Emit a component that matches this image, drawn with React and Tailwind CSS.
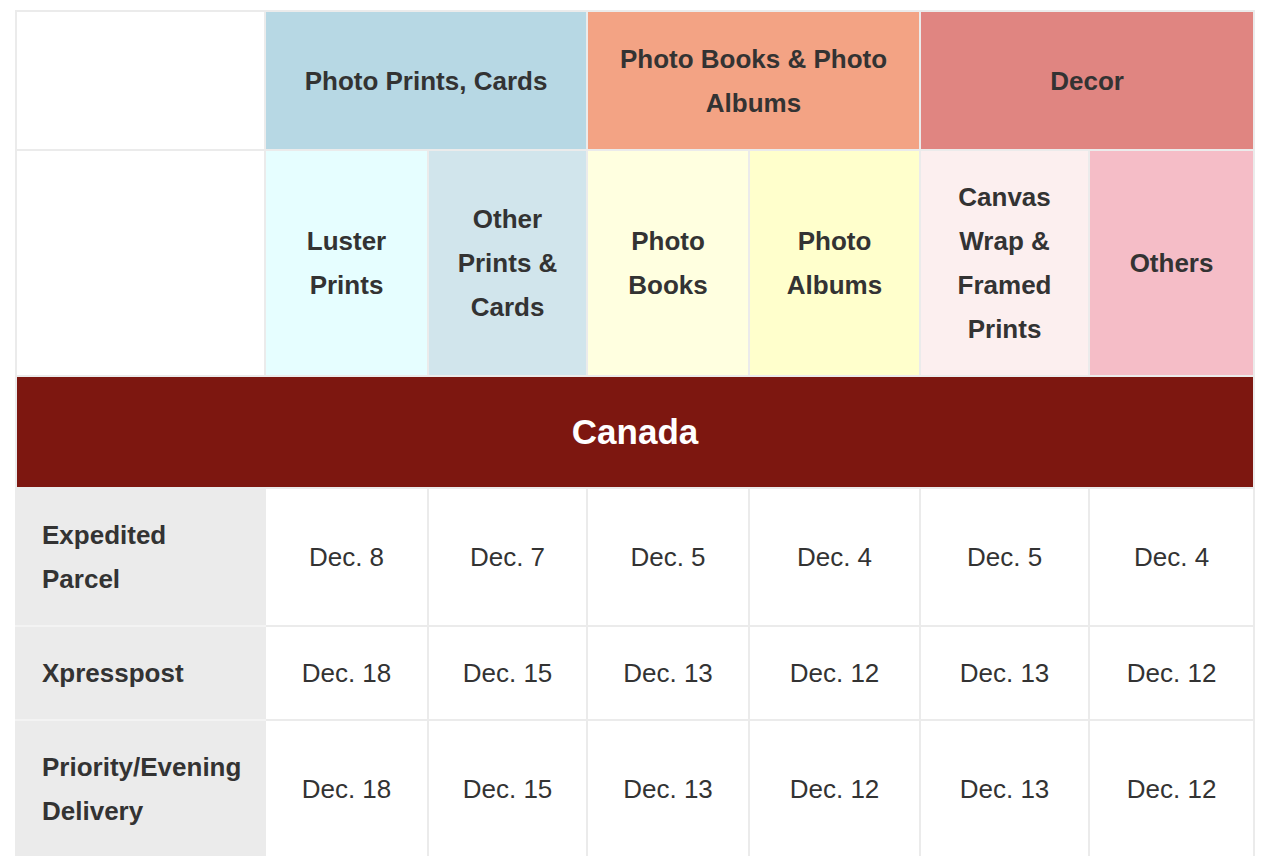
import React from 'react';

const groups = [
  { label: <>Photo Prints, Cards</>, span: 2, bg: 'bg-[#b7d8e4]' },
  { label: <>Photo Books &amp; Photo<br />Albums</>, span: 2, bg: 'bg-[#f3a384]' },
  { label: <>Decor</>, span: 2, bg: 'bg-[#e08581]' }
];

const products = [
  { label: <>Luster<br />Prints</>, bg: 'bg-[#e6feff]' },
  { label: <>Other<br />Prints &amp;<br />Cards</>, bg: 'bg-[#d1e5ec]' },
  { label: <>Photo<br />Books</>, bg: 'bg-[#ffffe0]' },
  { label: <>Photo<br />Albums</>, bg: 'bg-[#ffffcc]' },
  { label: <>Canvas<br />Wrap &amp;<br />Framed<br />Prints</>, bg: 'bg-[#fcefef]' },
  { label: <>Others</>, bg: 'bg-[#f5bdc7]' }
];

const rows = [
  { name: <>Expedited<br />Parcel</>, dates: ['Dec. 8', 'Dec. 7', 'Dec. 5', 'Dec. 4', 'Dec. 5', 'Dec. 4'] },
  { name: <>Xpresspost</>, dates: ['Dec. 18', 'Dec. 15', 'Dec. 13', 'Dec. 12', 'Dec. 13', 'Dec. 12'] },
  { name: <>Priority/Evening<br />Delivery</>, dates: ['Dec. 18', 'Dec. 15', 'Dec. 13', 'Dec. 12', 'Dec. 13', 'Dec. 12'] }
];

const cell = 'border-2 border-[#ebebeb] py-6 leading-[44px]';

export default function App() {
  return (
    <div className="min-h-screen bg-white pl-[15px] pt-[10px] text-[#333] font-['Liberation_Sans',Arial,sans-serif]">
      <table className="table-fixed border-collapse w-[1240px]">
        <colgroup>
          <col className="w-[249px]" />
          <col className="w-[163px]" />
          <col className="w-[159px]" />
          <col className="w-[162px]" />
          <col className="w-[171px]" />
          <col className="w-[169px]" />
          <col className="w-[165px]" />
        </colgroup>
        <thead>
          <tr>
            <th className={`${cell} pt-[25px] bg-white`}></th>
            {groups.map((g, i) => (
              <th key={i} colSpan={g.span} className={`${cell} pt-[25px] ${g.bg} text-[26px] font-bold text-center`}>
                {g.label}
              </th>
            ))}
          </tr>
          <tr>
            <th className={`${cell} bg-white`}></th>
            {products.map((p, i) => (
              <th key={i} className={`${cell} ${p.bg} text-[26px] font-bold text-center`}>
                {p.label}
              </th>
            ))}
          </tr>
        </thead>
        <tbody>
          <tr>
            <td colSpan={7} className="border-2 border-[#ebebeb] bg-[#7d1710] py-6 text-center text-[35px] font-bold leading-[62px] text-white">
              Canada
            </td>
          </tr>
          {rows.map((r, i) => (
            <tr key={i}>
              <th className={`${cell} border-b-[#f3f3f3] bg-[#ebebeb] pl-[25px] pr-2 text-left text-[26px] font-bold`}>{r.name}</th>
              {r.dates.map((d, j) => (
                <td key={j} className={`${cell} bg-white text-center text-[26px]`}>{d}</td>
              ))}
            </tr>
          ))}
        </tbody>
      </table>
    </div>
  );
}
